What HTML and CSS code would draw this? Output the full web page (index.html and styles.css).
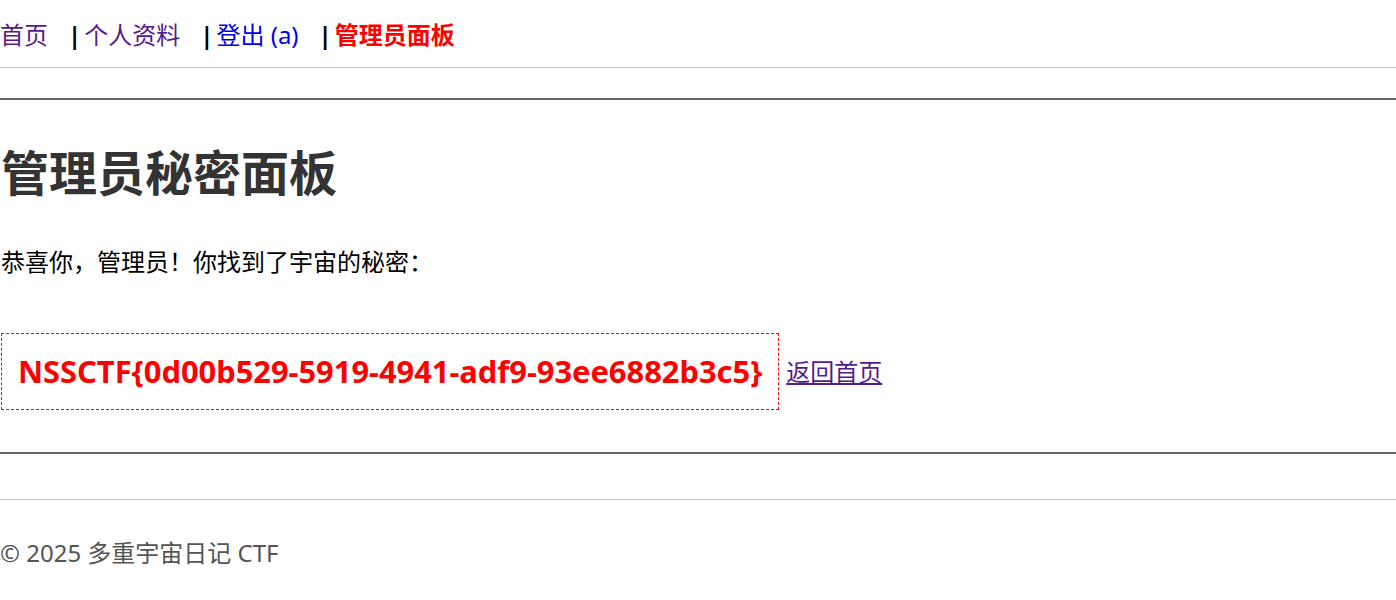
FILE: index.html
```html
<!DOCTYPE html>
<html lang="zh-CN">
<head>
<meta charset="utf-8">
<title>管理员秘密面板</title>
<link rel="stylesheet" href="styles.css">
</head>
<body>
<header class="site-header">
  <nav class="nav">
    <a class="nav-link visited" href="#">首页</a><span class="sep">|</span><a class="nav-link visited" href="#">个人资料</a><span class="sep">|</span><a class="nav-link fresh" href="#">登出 (a)</a><span class="sep">|</span><a class="nav-link admin" href="#">管理员面板</a>
  </nav>
</header>
<hr class="rule">
<main class="main">
  <h1 class="title">管理员秘密面板</h1>
  <p class="lead">恭喜你，管理员！你找到了宇宙的秘密：</p>
  <div class="flag-row">
    <div class="flag">NSSCTF{0d00b529-5919-4941-adf9-93ee6882b3c5}</div>
    <a class="back" href="#">返回首页</a>
  </div>
</main>
<hr class="rule rule-bottom">
<footer class="site-footer">
  <p class="copy">© 2025 多重宇宙日记 CTF</p>
</footer>
</body>
</html>
```
FILE: styles.css
```css
html, body {
  margin: 0;
  padding: 0;
  background: #fff;
}
body {
  font-family: "Noto Sans", "Noto Sans CJK SC", sans-serif;
  font-size: 24px;
  color: #000;
}
.site-header {
  padding: 17px 0 14px 0;
  border-bottom: 1px solid #cccccc;
}
.nav {
  line-height: 36px;
  height: 36px;
}
.nav-link {
  text-decoration: none;
}
.visited { color: #551a8b; }
.fresh { color: #0000ee; }
.admin { color: #ff0000; font-weight: bold; }
.sep {
  color: #000;
  font-weight: bold;
  margin: 0 3px 0 20px;
}
.rule {
  margin: 30px 0 0 0;
  border: 0;
  height: 2px;
  background: #666;
}
.main {
  padding: 0 0 0 1px;
}
.title {
  margin: 44px 0 0 0;
  font-size: 48px;
  line-height: 58px;
  font-weight: bold;
  color: #333;
}
.lead {
  margin: 42px 0 0 0;
  line-height: 36px;
}
.flag-row {
  margin-top: 53px;
  display: flex;
  align-items: center;
  gap: 7px;
}
.flag {
  border: 1px dashed #ff0000;
  color: #ff0000;
  font-weight: bold;
  font-size: 30.85px;
  line-height: 37px;
  padding: 19px 16px;
}
.back {
  color: #551a8b;
  text-decoration: underline;
  line-height: 36px;
}
.rule-bottom {
  margin-top: 42px;
}
.site-footer {
  margin-top: 45px;
  border-top: 1px solid #cccccc;
  padding: 35px 0 0 0;
}
.copy {
  margin: 0;
  color: #555;
  line-height: 36px;
}
```
